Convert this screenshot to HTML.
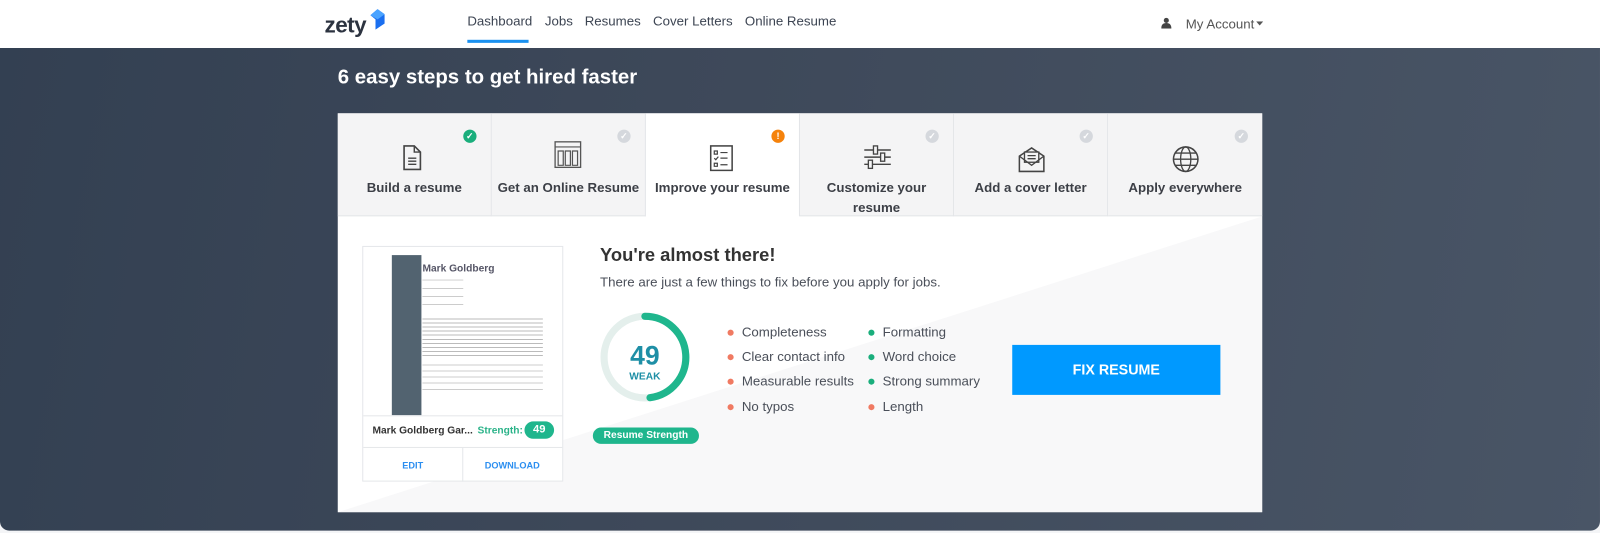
<!DOCTYPE html>
<html><head><meta charset="utf-8"><style>
*{box-sizing:border-box;margin:0;padding:0}
body{width:1600px;height:532px;background:#f4f5f7;font-family:"Liberation Sans",sans-serif;overflow:hidden}
#w{position:absolute;left:0;top:0;width:1568px;height:522px;transform:scale(1.0204);transform-origin:0 0}
.hdr{position:absolute;left:0;top:0;width:1568px;height:47px;background:#fff}
.dark{position:absolute;left:0;top:47px;width:1568px;height:473px;background:linear-gradient(100deg,#334052 0%,#3d4859 40%,#495566 100%);border-radius:0 0 9px 9px}
.logo{position:absolute;left:318px;top:12px;font-size:22px;font-weight:bold;color:#2c3340;letter-spacing:-0.5px}
.nav{position:absolute;top:13px;font-size:13px;color:#3c4452}
.ul{position:absolute;left:458px;top:39px;width:60px;height:3px;background:#1a91f0}
h1{position:absolute;left:331px;top:65px;font-size:20px;color:#fff;font-weight:bold}
.panel{position:absolute;left:331px;top:111px;width:906px;height:391px;background:#fff;overflow:hidden}
.tri{position:absolute;left:0;top:0;width:906px;height:391px;background:#f8f8f9;clip-path:polygon(906px 101px,906px 391px,0px 391px)}
.tab{position:absolute;top:0;width:151px;height:101px;background:#f4f4f5;border-right:1px solid #e3e5e8;border-bottom:1px solid #e3e5e8;text-align:center;font-size:13px;font-weight:bold;color:#3c3f46}
.tab.act{background:#fff;border-bottom:none}
.tab svg{position:absolute;left:62px;top:31px}
.tab .t{position:absolute;left:0;right:0;top:63px;line-height:20px}
.ck{position:absolute;right:14px;top:16px;width:13px;height:13px;border-radius:50%;background:#d5d8dd;color:#fff;font-size:9px;line-height:13px;text-align:center}
.card{position:absolute;left:24px;top:130px;width:197px;height:231px;border:1px solid #e5e7ea;background:#fff}
.dot{display:inline-block;width:6px;height:6px;border-radius:50%;margin-right:8px;vertical-align:middle;position:relative;top:-1px}
.li{position:absolute;font-size:13px;color:#4a4f59}
</style></head><body><div id="w">
<div class="hdr"></div>
<div class="logo">zety<svg width="14" height="22" style="position:absolute;left:45px;top:-3px"><polygon points="0,6 7,0 14,5 14,14 5,20 5,10" fill="#1a6ff0"/><polygon points="0,6 7,0 14,5 7,10" fill="#4aa3ff"/></svg></div>
<div class="nav" style="left:458px">Dashboard</div>
<div class="nav" style="left:534px">Jobs</div>
<div class="nav" style="left:573px">Resumes</div>
<div class="nav" style="left:640px">Cover Letters</div>
<div class="nav" style="left:730px">Online Resume</div>
<div class="ul"></div>
<svg style="position:absolute;left:1138px;top:17px" width="10" height="11"><circle cx="5" cy="3" r="2.5" fill="#444"/><path d="M0 11 Q0 5.5 5 5.5 Q10 5.5 10 11Z" fill="#444"/></svg>
<div class="nav" style="left:1162px;top:16px;color:#555">My Account</div>
<svg style="position:absolute;left:1231px;top:21px" width="7" height="4"><path d="M0 0h7L3.5 4z" fill="#555"/></svg>
<div class="dark"></div>
<h1>6 easy steps to get hired faster</h1>
<div class="panel">
<div class="tri"></div>
<div class="tab" style="left:0"><svg width="22" height="26"><path d="M3 1h10l6 6v17H3z" fill="none" stroke="#444" stroke-width="1.6"/><path d="M13 1v6h6M7 13h8M7 16h8M7 19h8" stroke="#444" stroke-width="1.4" fill="none"/></svg><div class="t">Build a resume</div><div class="ck" style="background:#1aae7c">✓</div></div>
<div class="tab" style="left:151px"><svg width="28" height="28" style="left:61px;top:27px"><rect x="1" y="1" width="25" height="25" fill="none" stroke="#555" stroke-width="1.3"/><path d="M1 6h25M4 10h5v14H4zM11 10h5v14h-5zM18 10h5v14h-5z" stroke="#555" stroke-width="1.2" fill="none"/></svg><div class="t">Get an Online Resume</div><div class="ck">✓</div></div>
<div class="tab act" style="left:302px"><svg width="24" height="26"><rect x="1.5" y="1" width="21" height="24" fill="none" stroke="#444" stroke-width="1.5"/><path d="M5 6h3v3H5zM11 7.5h7M5 13l1.5 1.5 2.5-3M11 13h7M5 18h3v3H5zM11 19.5h7" stroke="#444" stroke-width="1.2" fill="none"/></svg><div class="t">Improve your resume</div><div class="ck" style="background:#f5820b;font-weight:bold">!</div></div>
<div class="tab" style="left:453px"><svg width="28" height="26"><path d="M1 5h26M1 12h26M1 19h26" stroke="#444" stroke-width="1.4"/><rect x="10" y="1" width="4" height="8" fill="#f4f4f5" stroke="#444" stroke-width="1.3"/><rect x="17" y="8" width="4" height="8" fill="#f4f4f5" stroke="#444" stroke-width="1.3"/><rect x="5" y="15" width="4" height="8" fill="#f4f4f5" stroke="#444" stroke-width="1.3"/></svg><div class="t">Customize your<br>resume</div><div class="ck">✓</div></div>
<div class="tab" style="left:604px"><svg width="28" height="28"><path d="M2 11L14 3l12 8v15H2z" fill="none" stroke="#444" stroke-width="1.5"/><rect x="7" y="7" width="14" height="10" fill="#f4f4f5" stroke="#444" stroke-width="1.3"/><path d="M10 10.5h8M10 13.5h8M2 11l12 9 12-9" stroke="#444" stroke-width="1.3" fill="none"/></svg><div class="t">Add a cover letter</div><div class="ck">✓</div></div>
<div class="tab" style="left:755px;border-right:none"><svg width="28" height="28"><circle cx="14" cy="14" r="12" fill="none" stroke="#444" stroke-width="1.5"/><ellipse cx="14" cy="14" rx="5" ry="12" fill="none" stroke="#444" stroke-width="1.3"/><path d="M2 14h24M4 8h20M4 20h20" stroke="#444" stroke-width="1.3"/></svg><div class="t">Apply everywhere</div><div class="ck">✓</div></div>
<div class="card">
<div style="position:absolute;left:0;top:0;width:195px;height:165px;overflow:hidden">
<div style="position:absolute;left:28px;top:8px;width:29px;height:157px;background:#526370"></div>
<div style="position:absolute;left:58px;top:16px;font-size:10px;color:#556;font-weight:bold">Mark Goldberg</div>
<div style="position:absolute;left:58px;top:32px;width:40px;height:30px;background:repeating-linear-gradient(#ccc 0 1px,#fff 1px 8px)"></div>
<div style="position:absolute;left:58px;top:70px;width:118px;height:38px;background:repeating-linear-gradient(#bbb 0 1px,#fff 1px 4px)"></div>
<div style="position:absolute;left:58px;top:115px;width:118px;height:30px;background:repeating-linear-gradient(#ccc 0 1px,#fff 1px 6px)"></div>
</div>
<div style="position:absolute;left:0;top:165px;width:195px;height:32px;border-top:1px solid #e5e7ea;border-bottom:1px solid #e5e7ea"></div>
<div style="position:absolute;left:9px;top:175px;font-size:10px;font-weight:bold;color:#333">Mark Goldberg Gar...</div>
<div style="position:absolute;left:112px;top:175px;font-size:10px;font-weight:bold;color:#2bb389">Strength:</div>
<div style="position:absolute;left:158px;top:171px;width:29px;height:17px;border-radius:9px;background:#1fb68d;color:#fff;font-size:11px;font-weight:bold;text-align:center;line-height:17px">49</div>
<div style="position:absolute;left:97px;top:197px;width:1px;height:33px;background:#e5e7ea"></div>
<div style="position:absolute;left:0;top:209px;width:97px;text-align:center;font-size:9px;font-weight:bold;color:#2b8ef0">EDIT</div>
<div style="position:absolute;left:97px;top:209px;width:98px;text-align:center;font-size:9px;font-weight:bold;color:#2b8ef0">DOWNLOAD</div>
</div>
<div style="position:absolute;left:257px;top:129px;font-size:18px;font-weight:bold;color:#333">You're almost there!</div>
<div style="position:absolute;left:257px;top:158px;font-size:13px;color:#4a4f59">There are just a few things to fix before you apply for jobs.</div>
<svg style="position:absolute;left:255px;top:193px" width="92" height="92"><circle cx="46" cy="46" r="40" fill="none" stroke="#e4efec" stroke-width="7"/><path d="M46 6 A40 40 0 0 1 51 85.7" fill="none" stroke="#1fb68d" stroke-width="7" stroke-linecap="round"/></svg>
<div style="position:absolute;left:255px;top:222px;width:92px;text-align:center;font-size:26px;font-weight:bold;color:#1e8fa6">49</div>
<div style="position:absolute;left:255px;top:253px;width:92px;text-align:center;font-size:10px;font-weight:bold;color:#1e8fa6">WEAK</div>
<div style="position:absolute;left:250px;top:308px;width:104px;height:16px;border-radius:8px;background:#1fb68d;color:#fff;font-size:10px;font-weight:bold;text-align:center;line-height:16px">Resume Strength</div>
<div class="li" style="left:382px;top:207px"><span class="dot" style="background:#f07a62"></span>Completeness</div>
<div class="li" style="left:382px;top:231px"><span class="dot" style="background:#f07a62"></span>Clear contact info</div>
<div class="li" style="left:382px;top:255px"><span class="dot" style="background:#f07a62"></span>Measurable results</div>
<div class="li" style="left:382px;top:280px"><span class="dot" style="background:#f07a62"></span>No typos</div>
<div class="li" style="left:520px;top:207px"><span class="dot" style="background:#1aae7c"></span>Formatting</div>
<div class="li" style="left:520px;top:231px"><span class="dot" style="background:#1aae7c"></span>Word choice</div>
<div class="li" style="left:520px;top:255px"><span class="dot" style="background:#1aae7c"></span>Strong summary</div>
<div class="li" style="left:520px;top:280px"><span class="dot" style="background:#f07a62"></span>Length</div>
<div style="position:absolute;left:661px;top:227px;width:204px;height:49px;background:#0099ff;color:#fff;font-size:14px;font-weight:bold;text-align:center;line-height:49px">FIX RESUME</div>
</div>
</div></body></html>
